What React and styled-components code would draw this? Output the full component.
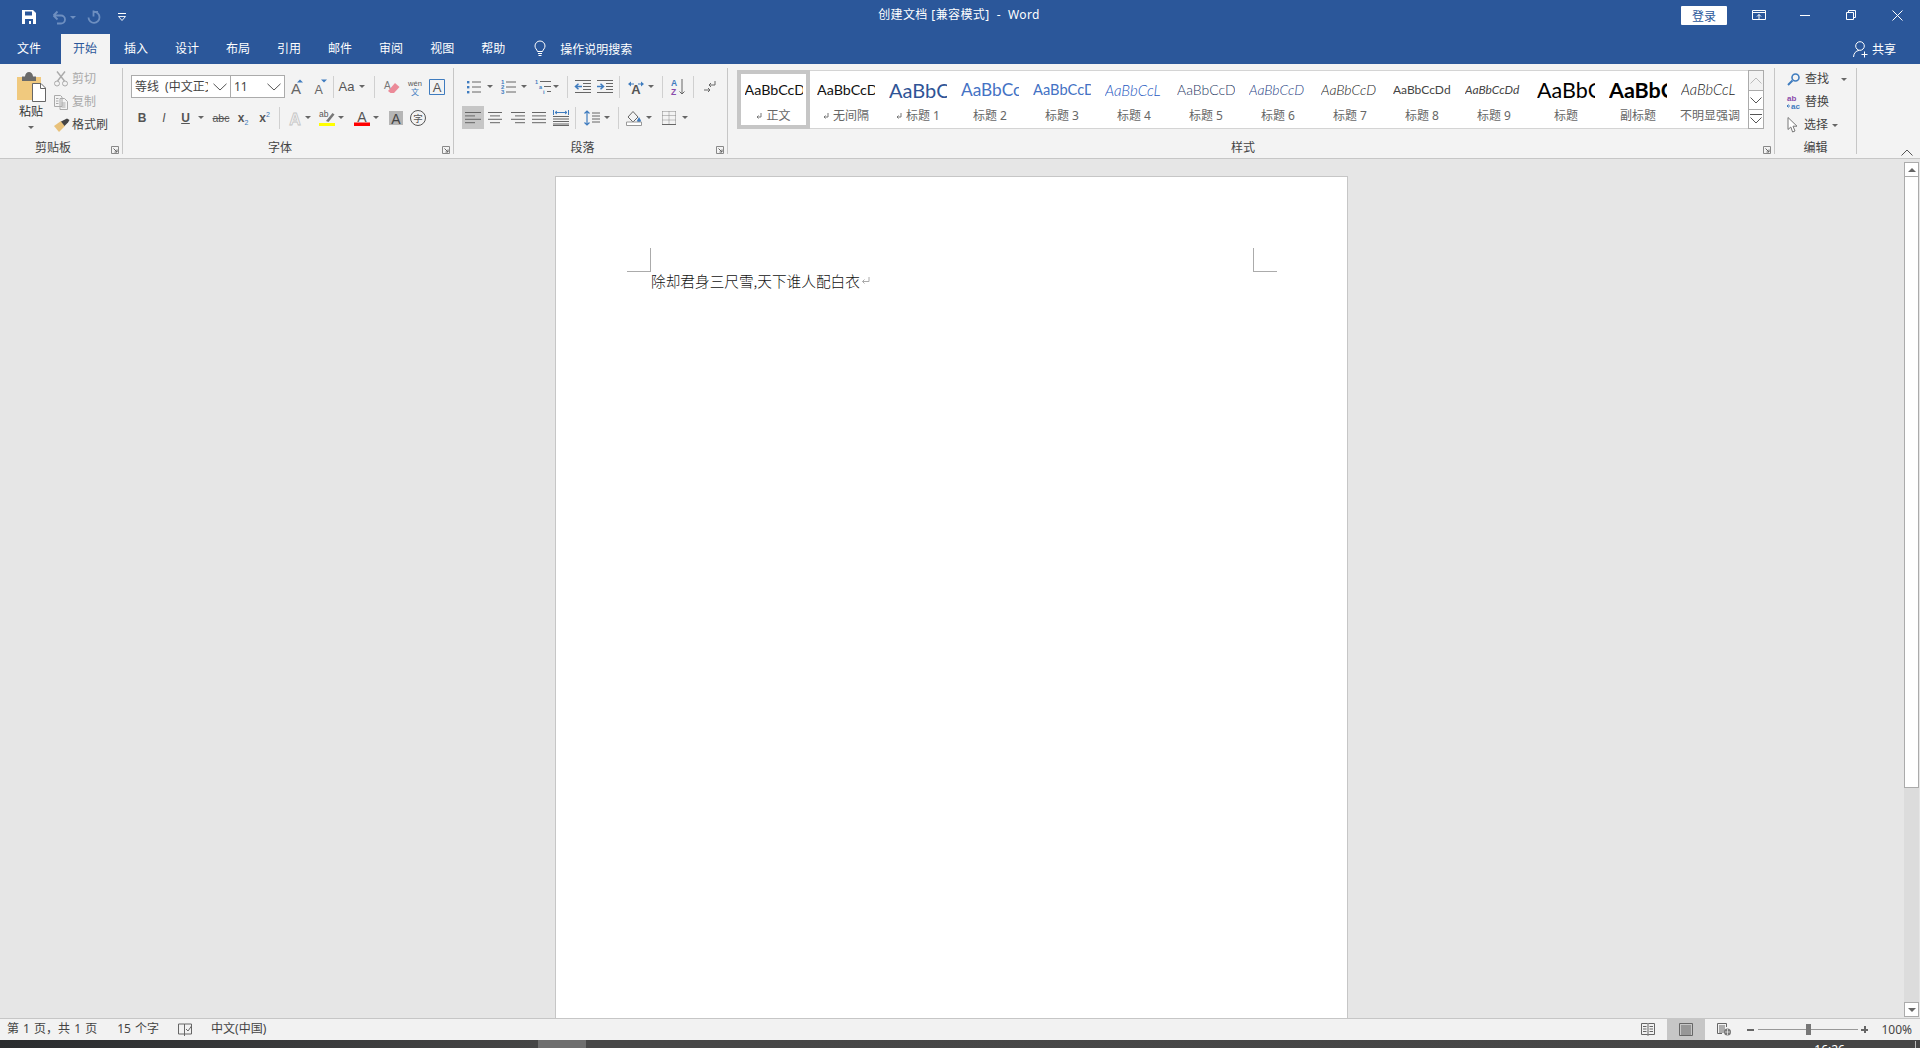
import React from "react";
import styled, { createGlobalStyle } from "styled-components";

const Global = createGlobalStyle`
  html, body, #root { margin: 0; height: 100%; overflow: hidden; }
  body { font-family: "Noto Sans", "Noto Sans CJK SC", sans-serif; font-size: 12px; color: #444; }
  * { box-sizing: border-box; }
`;

const Shell = styled.div`height: 100vh; display: flex; flex-direction: column; background: #e6e6e6;`;
const TitleBar = styled.header`height: 34px; flex: none; background: #2b579a; color: #fff; display: grid; grid-template-columns: 1fr auto 1fr;`;
const Qat = styled.div`display: flex; align-items: center; padding-left: 22px;`;
const QatSlot = styled.span`display: flex; align-items: center; justify-content: center; width: ${p => p.$w}px; height: 16px; margin-left: ${p => p.$ml || 0}px;`;
const Title = styled.div`line-height: 30px; font-size: 12px; white-space: pre; color: #fff; letter-spacing: .4px; margin-left: -2px;`;
const WinControls = styled.div`display: flex; justify-content: flex-end; align-items: flex-start;`;
const LoginBtn = styled.button`width: 46px; height: 19px; margin: 6px 9px 0 0; border: 0; padding: 0; border-radius: 1px; background: #fff; color: #2b579a; font: 12px/18px "Noto Sans CJK SC", sans-serif;`;
const WinBtn = styled.span`width: 46px; height: 30px; display: flex; align-items: center; justify-content: center;`;

const TabBar = styled.nav`height: 30px; flex: none; background: #2b579a; display: flex; color: #fff;`;
const Tab = styled.span`height: 30px; line-height: 29px; padding: ${p => p.$first ? "0 20px 0 17px" : p.$active ? "0 13px 0 12px" : "0 13px 0 14px"}; background: ${p => p.$active ? "#f3f3f3" : "transparent"}; color: ${p => p.$active ? "#2b579a" : "#fff"};`;
const SearchHint = styled.span`display: flex; align-items: center; gap: 13px; margin-left: 15px; line-height: 29px;`;
const Share = styled.span`margin-left: auto; padding-right: 24px; display: flex; align-items: center; gap: 4px;`;

const Ribbon = styled.section`height: 95px; flex: none; background: #f3f3f3; border-bottom: 1px solid #c6c6c6; padding-top: 4px; display: flex; align-items: flex-start;`;
const Group = styled.div`width: ${p => p.$w}px; height: 86px; flex: none; border-right: 1px solid #c6c6c6; display: flex; flex-direction: column;`;
const GroupBody = styled.div`height: 70px; flex: none; display: flex; padding: ${p => p.$pad || "0"};`;
const GroupFoot = styled.div`height: 16px; display: flex; align-items: flex-start;`;
const GroupLabel = styled.span`flex: 1; text-align: center; line-height: 16px; margin-top: 2px; color: #444;`;
const Launcher = styled.span`width: 16px; flex: none; padding: 8px 0 0 5px;`;

const PasteCol = styled.div`width: 46px; margin-left: 8px; display: flex; flex-direction: column; align-items: center; padding-top: 4px; color: #333;`;
const PasteLabel = styled.span`line-height: 16px; margin-top: 2px;`;
const PasteCaret = styled.span`margin-top: 6px;`;
const ClipCol = styled.div`display: flex; flex-direction: column; gap: 5px; padding-top: 2px;`;
const ClipRow = styled.span`height: 18px; display: flex; align-items: center; gap: ${p => p.$gap ?? 4}px; line-height: 18px; color: ${p => p.$off ? "#aaa" : "#444"};`;
const TrailCaret = styled.span`margin-left: ${p => p.$ml}px;`;

const ToolRows = styled.div`display: flex; flex-direction: column; gap: 8px; padding: 7px 0 0 ${p => p.$left}px;`;
const ToolRow = styled.div`height: 23px; display: flex; align-items: center;`;
const Cell = styled.span`width: ${p => p.$w}px; height: 23px; flex: none; display: flex; align-items: center; justify-content: center; gap: ${p => p.$gap ?? 0}px; background: ${p => p.$on ? "#c6c6c6" : "transparent"};`;
const VSep = styled.span`width: 1px; height: 22px; flex: none; background: #d0d0d0; margin: 0 ${p => p.$m ?? 4}px;`;
const Caret = styled.i`display: block; flex: none; width: 0; height: 0; border: 3px solid transparent; border-top: 3px solid #666; border-bottom: 0;`;
const Combo = styled.span`width: ${p => p.$w}px; height: 23px; flex: none; background: #fff; border: 1px solid #ababab; margin-right: -1px; display: flex; align-items: center; padding: 0 3px 0 3px;`;
const ComboText = styled.span`flex: 1; min-width: 0; overflow: hidden; white-space: nowrap; color: #444; font-size: 12px; line-height: 21px; margin-right: 5px; word-spacing: 3px;`;
const B = styled.span`font: ${p => p.$i ? "italic " : ""}${p => p.$wt || 700} ${p => p.$s || 12}px/14px "Liberation Sans", sans-serif; color: ${p => p.$c || "#555"}; text-decoration: ${p => p.$strike ? "line-through" : p.$u ? "underline" : "none"};`;
const Sub = styled.sub`font-size: 7px; color: #3a78b8; line-height: 0; font-weight: 400;`;
const Sup = styled.sup`font-size: 7px; color: #3a78b8; line-height: 0; font-weight: 400;`;

const Gallery = styled.div`width: 1027px; height: 59px; margin: 2px 0 0 9px; background: #fff; border: 1px solid #d4d4d4; display: flex;`;
const StyleItem = styled.div`width: ${p => p.$on ? 73 : 72}px; height: 59px; margin: -1px 0 -1px ${p => p.$on ? -1 : 0}px; flex: none; box-shadow: ${p => p.$on ? "inset 0 0 0 4px #c6c6c6" : "none"}; display: flex; flex-direction: column; align-items: center;`;
const Preview = styled.div`width: 58px; height: 40px; overflow: hidden; white-space: nowrap; line-height: 40px; font-family: Lato, "Noto Sans", sans-serif; font-size: ${p => p.$s || 14}px; font-style: ${p => p.$i ? "italic" : "normal"}; font-weight: ${p => p.$wt || 300}; color: ${p => p.$c || "#000"};`;
const StyleName = styled.div`height: 12px; display: flex; align-items: center; gap: 4px; color: #666; white-space: nowrap; line-height: 12px;`;
const GalleryScroll = styled.div`width: 16px; margin: -1px 0 -1px 2px; display: flex; flex-direction: column; flex: none;`;
const GalleryBtn = styled.span`height: ${p => p.$h}px; margin-top: ${p => p.$top ? -1 : 0}px; border: 1px solid #ababab; background: ${p => p.$off ? "#f3f3f3" : "#fff"}; display: flex; align-items: center; justify-content: center;`;
const Collapse = styled.span`margin: 81px 0 0 44px;`;

const Main = styled.main`flex: 1; min-height: 0; display: flex;`;
const Canvas = styled.div`flex: 1; min-width: 0; overflow: hidden; display: flex; justify-content: center; align-items: flex-start; padding: 17px 1px 0 0;`;
const Page = styled.article`width: 793px; height: 1123px; flex: none; background: #fff; border: 1px solid #c6c6c6; padding: 71px 70px 71px 71px;`;
const CropRow = styled.div`height: 24px; display: flex; justify-content: space-between;`;
const Crop = styled.span`width: 24px; height: 24px; border-bottom: 1px solid #ababab; ${p => p.$right ? "border-left" : "border-right"}: 1px solid #ababab;`;
const DocLine = styled.p`margin: 0; padding: 0 0 0 24px; font: 300 14.67px/18px "Noto Sans CJK SC", sans-serif; color: #111; white-space: pre; display: flex; align-items: center;`;
const ParaMark = styled.span`margin-left: 1px; display: flex;`;

const ScrollCol = styled.aside`width: 16px; flex: none; padding: 3px 1px 1px 0; display: flex; flex-direction: column;`;
const ScrollBtn = styled.span`height: 15px; flex: none; background: #fff; border: 1px solid #ababab; display: flex; align-items: center; justify-content: center;`;
const Thumb = styled.span`height: 612px; flex: none; background: #fff; border: 1px solid #ababab; margin-top: -1px;`;
const Track = styled.span`flex: 1; background: #dcdcdc;`;

const Status = styled.footer`height: 22px; flex: none; background: #f2f2f2; border-top: 1px solid #c6c6c6; display: flex; align-items: center; color: #444; padding-left: 7px;`;
const StatText = styled.span`line-height: 19px; height: 19px; margin-bottom: 2px; white-space: pre; word-spacing: 1px; margin-left: ${p => p.$ml || 0}px; display: flex; align-items: center;`;
const StatRight = styled.div`margin-left: auto; height: 21px; display: flex; align-items: center;`;
const ViewBtn = styled.span`width: 38px; height: 21px; display: flex; align-items: center; justify-content: center; background: ${p => p.$on ? "#c6c6c6" : "transparent"};`;
const ZoomSign = styled.span`width: 7px; height: 7px; display: block; position: relative; margin: ${p => p.$m}; &::before { content: ""; position: absolute; left: 0; right: 0; top: 3px; height: 1.5px; background: #666; } ${p => p.$plus ? `&::after { content: ""; position: absolute; top: 0; bottom: 0; left: 3px; width: 1.5px; background: #666; }` : ""}`;
const Slider = styled.span`width: 100px; height: 11px; display: flex; align-items: center; justify-content: center; background: linear-gradient(#999, #999) center / 100% 1px no-repeat;`;
const SliderKnob = styled.span`width: 5px; height: 11px; background: #777;`;
const Percent = styled.span`margin: 0 8px 0 13px; line-height: 21px; color: #444;`;

const Taskbar = styled.div`height: 8px; flex: none; overflow: hidden; background: linear-gradient(90deg, #2a2c2e 0%, #474747 30%, #464646 100%); display: flex;`;
const TaskItem = styled.span`width: 48px; margin-left: 538px; background: #6e6e6e;`;
const Clock = styled.span`margin-left: auto; margin-right: 70px; color: #fff; font: 12px/16px "Noto Sans", sans-serif; padding-top: 2px;`;
const TrayLine = styled.span`width: 1px; background: #bbb; margin-right: 4px; margin-top: 1px;`;

const Svg = styled.svg`display: block; flex: none; overflow: visible;`;
const Ico = ({ w = 16, h = 16, children }) => <Svg width={w} height={h} viewBox={`0 0 ${w} ${h}`} fill="none">{children}</Svg>;
const G = "#666", BL = "#3f7cbf";
const lines = (ys, x1, x2, c = G) => ys.map(y => <path key={y} d={`M${x1} ${y + .5}H${x2}`} stroke={c} />);

const SaveIcon = () => <Ico w={14} h={14}><path d="M0 0H11L14 3V14H0Z" fill="#fff" /><path d="M3 1.5H10V5.5H3Z" fill="#2b579a" /><path d="M3 9H11V14H9V11H7V14H3Z" fill="#2b579a" /></Ico>;
const UndoIcon = () => <Ico w={14} h={14}><path d="M1.5 5.5H9A4 4 0 0 1 9 13.5H5M1.5 5.5L5.5 1.5M1.5 5.5L5.5 9.5" stroke="#6e8fc0" strokeWidth="1.8" /></Ico>;
const RedoIcon = () => <Ico w={14} h={14}><path d="M8 1.8A5.5 5.5 0 1 1 2.5 7.5" stroke="#6e8fc0" strokeWidth="1.8" /><path d="M7.5 .5V1.8H12M7.5 1.8V6.5" stroke="#6e8fc0" strokeWidth="1.8" /></Ico>;
const QatMore = () => <Ico w={8} h={9}><path d="M0 .5H8" stroke="#fff" /><path d="M.5 3.5H7.5L4 7.5Z" stroke="#fff" strokeWidth=".9" /></Ico>;
const RibbonOpt = () => <Ico w={14} h={10}><path d="M.5 .5H13.5V9.5H.5Z" stroke="#fff" /><path d="M.5 2.5H13.5" stroke="#fff" /><path d="M7 9V4.5M5 6.5L7 4.5L9 6.5" stroke="#fff" /></Ico>;
const MinIco = () => <Ico w={10} h={10}><path d="M0 5.5H10" stroke="#fff" /></Ico>;
const RestoreIco = () => <Ico w={10} h={10}><path d="M.5 2.5H7.5V9.5H.5ZM2.5 2.5V.5H9.5V7.5H7.5" stroke="#fff" /></Ico>;
const CloseIco = () => <Ico w={11} h={11}><path d="M.5 .5L10.5 10.5M10.5 .5L.5 10.5" stroke="#fff" /></Ico>;
const Bulb = () => <Ico w={14} h={16}><path d="M4.5 10.5C4 8.5 2 7.5 2 5A5 5 0 0 1 12 5C12 7.5 10 8.5 9.5 10.5ZM5 12.5H9M5.5 14.5H8.5" stroke="#fff" /></Ico>;
const ShareIco = () => <Ico w={15} h={17}><circle cx="7" cy="5" r="4.3" stroke="#fff" /><path d="M.5 16C.8 12 3 9.8 6 9.4" stroke="#fff" /><path d="M11.5 10.5V16.5M8.5 13.5H14.5" stroke="#fff" /></Ico>;

const PasteIco = () => <Ico w={29} h={30}><path d="M0 5H24V28H0Z" fill="#f0c97e" /><path d="M8 4.5C8 2 10 0 12 0S16 2 16 4.5H19V9H5V4.5Z" fill="#6a6a6a" /><path d="M15.5 11.5H24L28.5 16V29.5H15.5Z" fill="#fff" stroke="#666" /><path d="M23.5 11.5V16.5H28.5" stroke="#666" /></Ico>;
const CutIco = () => <Ico w={14} h={16}><path d="M3 .5L10.5 10M11 .5L3.5 10" stroke="#aaa" strokeWidth="1.4" /><circle cx="3" cy="12.5" r="2.5" stroke="#aaa" /><circle cx="11" cy="12.5" r="2.5" stroke="#aaa" /></Ico>;
const CopyIco = () => <Ico w={14} h={15}><path d="M.5 .5H6.5L8 2V11.5H.5ZM6 3.5H10.5L13.5 6.5V14.5H6Z" stroke="#aaa" fill="#f3f3f3" /><path d="M2 3.5H4.5M2 6H4.5M2 8.5H4.5M7.5 8H11.5M7.5 10H11.5M7.5 12H11.5" stroke="#aaa" /></Ico>;
const BrushIco = () => <Ico w={16} h={14}><path d="M0 8L7 3L11 8L5 14Z" fill="#e8c17a" /><path d="M7 3.5L13 .5L15.5 2L14 4.5L10.5 8Z" fill="#444" /></Ico>;
const Launch = () => <Ico w={8} h={8}><path d="M.5 .5H7.5V7.5H.5Z" stroke="#888" /><path d="M2.5 2.5L6 6M6 3.5V6H3.5" stroke="#666" /></Ico>;
const Chevron = () => <Ico w={14} h={8}><path d="M.5 .8L7 7L13.5 .8" stroke="#555" /></Ico>;

const GrowA = ({ up }) => <Svg width={18} height={16} viewBox="0 0 18 16" fill="none"><text x={up ? 4 : 3.5} y="15" fontSize={up ? 15 : 12.5} fontFamily="Liberation Sans" fill="#666">A</text><path d={up ? "M10 3.5L13 .5L16 3.5Z" : "M10 .5H16L13 3.5Z"} fill={BL} /></Svg>;
const EraserIco = () => <Ico w={16} h={16}><text x="0" y="10" fontSize="10" fontFamily="Liberation Sans" fill="#777">A</text><path d="M4 12L11 4L15.5 8L10 14H6.5Z" fill="#eb8a98" /></Ico>;
const WenIco = () => <Svg width={16} height={16} viewBox="0 0 16 16" fill="none"><text x="8" y="6.5" textAnchor="middle" fontSize="7.5" fontFamily="Liberation Sans" fill="#555">wén</text><text x="8" y="15.5" textAnchor="middle" fontSize="8" fontFamily="Noto Sans CJK SC" fill={BL}>文</text></Svg>;
const BoxA = () => <Ico w={16} h={16}><path d="M.5 .5H15.5V15.5H.5Z" stroke={BL} /><text x="8" y="13" textAnchor="middle" fontSize="13" fontFamily="Liberation Sans" fill="#555">A</text></Ico>;
const GlowA = () => <Ico w={14} h={14}><text x="7" y="13.5" textAnchor="middle" fontSize="16" fontWeight="700" fontFamily="Liberation Sans" fill="#f3f3f3" stroke="#c4c4c4" strokeWidth=".8">A</text></Ico>;
const HighlightIco = () => <Ico w={16} h={16}><text x="0" y="7" fontSize="8.5" fontFamily="Liberation Sans" fill="#555">ab</text><path d="M7 11L13.5 3L15.5 4.5L9.5 12Z" fill="#777" /><path d="M0 13H16V16H0Z" fill="#ff0" /></Ico>;
const ColorA = () => <Ico w={16} h={16}><text x="8" y="12" textAnchor="middle" fontSize="14" fontFamily="Liberation Sans" fill="#555">A</text><path d="M0 12.5H16V16H0Z" fill="#f00" /></Ico>;
const ShadeA = () => <Ico w={14} h={14}><path d="M0 0H14V14H0Z" fill="#b5b5b5" /><text x="7" y="12.5" textAnchor="middle" fontSize="14" fontWeight="400" fontFamily="Liberation Sans" fill="#444">A</text></Ico>;
const CircleZi = () => <Ico w={16} h={16}><circle cx="8" cy="8" r="7.5" stroke="#555" /><text x="8" y="11.5" textAnchor="middle" fontSize="9.5" fontFamily="Noto Sans CJK SC" fill="#555">字</text></Ico>;

const BulletIco = () => <Ico w={14} h={14}>{[1, 6, 11].map(y => <path key={y} d={`M0 ${y}H2.4V${y + 2.4}H0Z`} fill={BL} />)}{lines([1.5, 6.5, 11.5], 5, 14)}</Ico>;
const NumIco = () => <Ico w={15} h={15}>{[["1", 5], ["2", 10], ["3", 15]].map(([t, y]) => <text key={t} x="0" y={y} fontSize="6" fontWeight="700" fontFamily="Liberation Sans" fill={BL}>{t}</text>)}{lines([2.5, 7.5, 12.5], 5, 15)}</Ico>;
const MultiIco = () => <Ico w={16} h={15}><text x="0" y="5" fontSize="5.5" fontWeight="700" fontFamily="Liberation Sans" fill={BL}>1</text><text x="4" y="10" fontSize="5.5" fontWeight="700" fontFamily="Liberation Sans" fill={BL}>a</text><text x="8" y="15" fontSize="5.5" fontWeight="700" fontFamily="Liberation Sans" fill={BL}>i</text>{lines([2], 5, 16)}{lines([7], 9, 16)}{lines([12], 12, 16)}</Ico>;
const IndentIco = ({ inc }) => <Ico w={16} h={13}>{lines([0, 12], 0, 16)}{lines([3, 6, 9], inc ? 9 : 8, 16)}<path d={inc ? "M0 6.5H6M3.5 3.8L6.5 6.5L3.5 9.2" : "M7 6.5H1M3.5 3.8L.5 6.5L3.5 9.2"} stroke={BL} strokeWidth="1.5" /></Ico>;
const CnLayoutIco = () => <Ico w={18} h={14}><path d="M1 4L4 1.5V6.5ZM17 4L14 1.5V6.5Z" fill={BL} /><path d="M4 4H7M11 4H14" stroke={BL} /><text x="9" y="13.5" textAnchor="middle" fontSize="13" fontWeight="700" fontFamily="Liberation Sans" fill="#555">A</text></Ico>;
const SortIco = () => <Ico w={14} h={16}><text x="0" y="7" fontSize="8.5" fontWeight="700" fontFamily="Liberation Sans" fill={BL}>A</text><text x="0" y="15.5" fontSize="8.5" fontWeight="700" fontFamily="Liberation Sans" fill="#8a4bab">Z</text><path d="M11 0V15M8.5 12.5L11 15L13.5 12.5" stroke="#666" /></Ico>;
const ShowMarksIco = () => <Ico w={12} h={13}><path d="M11 1V5H5M7 3L5 5L7 7" stroke="#666" /><path d="M0 10H6M4 8L6 10L4 12" stroke="#666" /></Ico>;
const AlignIco = ({ kind }) => {
  const rows = { left: [[0, 16], [0, 10], [0, 16], [0, 10]], center: [[1, 15], [3, 13], [1, 15], [3, 13]], right: [[2, 16], [6, 16], [2, 16], [6, 16]], just: [[1, 15], [1, 15], [1, 15], [1, 15]] }[kind];
  return <Ico w={16} h={13}>{rows.map(([a, b], i) => <path key={i} d={`M${a} ${1.5 + i * 3.4}H${b}`} stroke={G} />)}</Ico>;
};
const DistIco = () => <Ico w={16} h={16}><path d="M.5 0V5M15.5 0V5" stroke={BL} /><path d="M2 2.5H14M4 1L2 2.5L4 4M12 1L14 2.5L12 4" stroke={BL} />{lines([6, 8.5, 11, 13.5, 15], 0, 16)}</Ico>;
const LineSpaceIco = () => <Ico w={16} h={16}><path d="M3 1V15M.5 3.5L3 1L5.5 3.5M.5 12.5L3 15L5.5 12.5" stroke={BL} strokeWidth="1.2" />{lines([2.5, 5.5, 8.5, 11.5], 8, 16)}</Ico>;
const BucketIco = () => <Ico w={16} h={16}><path d="M2 7L7 1.5L12 7L7 12Z" fill="#f3f3f3" stroke="#666" /><path d="M13 7L15 10.5A2 2 0 0 1 11 10.5Z" fill={BL} /><path d="M.5 12H15.5V15.5H.5Z" stroke="#999" fill="#fff" /></Ico>;
const BorderIco = () => <Ico w={14} h={14}><path d="M.5 .5H13.5M.5 4.5H13.5M.5 9H13.5M.5 .5V13M7 .5V13M13.5 .5V13" stroke="#888" strokeDasharray="1 1" /><path d="M0 13.5H14" stroke="#666" /></Ico>;

const FindIco = () => <Ico w={13} h={13}><circle cx="8.5" cy="4.5" r="3.5" stroke={BL} strokeWidth="1.6" /><path d="M5.5 7.5L1 12" stroke={BL} strokeWidth="2" /></Ico>;
const ReplaceIco = () => <Ico w={14} h={16}><text x="0" y="7" fontSize="8" fontWeight="700" fontFamily="Liberation Sans" fill="#8a4bab">ab</text><text x="4" y="15" fontSize="8" fontWeight="700" fontFamily="Liberation Sans" fill={BL}>ac</text><path d="M0 12H3M1.5 10.5L0 12L1.5 13.5" stroke={BL} /></Ico>;
const CursorIco = () => <Ico w={11} h={16}><path d="M1 .5V12.5L3.8 10L5.6 15L8 14L6 9.2H10Z" stroke="#777" fill="#fff" /></Ico>;
const RetMark = () => <Ico w={6} h={7}><path d="M5 0V4H1M2.5 2.5L1 4L2.5 5.5" stroke="#777" /></Ico>;
const DocMark = () => <Ico w={9} h={8}><path d="M8 0V4.5H1.5M3.5 2.5L1.5 4.5L3.5 6.5" stroke="#aaa" /></Ico>;

const UpTri = ({ c = "#666", s = 4 }) => <Ico w={s * 2} h={s}><path d={`M0 ${s}L${s} 0L${s * 2} ${s}Z`} fill={c} /></Ico>;
const DownTri = ({ c = "#666", s = 4 }) => <Ico w={s * 2} h={s}><path d={`M0 0H${s * 2}L${s} ${s}Z`} fill={c} /></Ico>;
const ChevUp = ({ c = "#bbb" }) => <Ico w={12} h={7}><path d="M.5 6.5L6 1L11.5 6.5" stroke={c} /></Ico>;
const ChevDn = () => <Ico w={12} h={7}><path d="M.5 .5L6 6L11.5 .5" stroke="#555" /></Ico>;
const GalMore = () => <Ico w={12} h={11}><path d="M0 .5H12" stroke="#555" /><path d="M.5 3.5L6 9L11.5 3.5" stroke="#555" /></Ico>;
const CollapseIco = () => <Ico w={12} h={7}><path d="M.5 6.5L6 1L11.5 6.5" stroke="#555" /></Ico>;

const ProofIco = () => <Ico w={14} h={14}><path d="M6.5 2H.5V12H6.5M6.5 2V14M6.5 2H13.5V12H6.5" stroke="#666" /><path d="M8 7L10 9L13.5 4" stroke="#666" /></Ico>;
const ReadIco = () => <Ico w={14} h={13}><path d="M.5 .5H6.5L7 1L7.5 .5H13.5V11.5H7.5L7 12.5L6.5 11.5H.5ZM7 1V12" stroke="#666" />{lines([3, 5.5, 8], 2, 5.5)}{lines([3, 5.5, 8], 8.5, 12)}</Ico>;
const PrintIco = () => <Ico w={14} h={13}><path d="M.5 .5H13.5V12.5H.5Z" stroke="#666" fill="#c6c6c6" />{lines([2.5, 4.5, 6.5, 8.5, 10.5], 2, 12)}</Ico>;
const WebIco = () => <Ico w={14} h={13}><path d="M.5 .5H9.5V4M.5 .5V10.5H5" stroke="#666" />{lines([2.5, 4.5, 6.5, 8.5], 2, 8)}<circle cx="10.5" cy="9" r="3.5" fill="#777" /><path d="M8 9H13M10.5 6V12" stroke="#f2f2f2" strokeWidth=".7" /></Ico>;

const tabs = ["开始", "插入", "设计", "布局", "引用", "邮件", "审阅", "视图", "帮助"];
const gallery = [
  { text: "AaBbCcD", name: "正文", mark: true, on: true, s: 14.3, wt: 400, c: "#111" },
  { text: "AaBbCcD", name: "无间隔", mark: true, s: 14.3, wt: 400, c: "#111" },
  { text: "AaBbC", name: "标题 1", mark: true, s: 20, wt: 400, c: "#2f5496" },
  { text: "AaBbCc", name: "标题 2", s: 17.3, wt: 400, c: "#4472c4" },
  { text: "AaBbCcD", name: "标题 3", s: 14.67, wt: 400, c: "#4472c4" },
  { text: "AaBbCcL", name: "标题 4", i: true, s: 15, c: "#2557c0" },
  { text: "AaBbCcD", name: "标题 5", c: "#1f3864" },
  { text: "AaBbCcD", name: "标题 6", i: true, c: "#1f4284" },
  { text: "AaBbCcD", name: "标题 7", i: true, c: "#222" },
  { text: "AaBbCcDd", name: "标题 8", s: 12, wt: 400, c: "#444" },
  { text: "AaBbCcDd", name: "标题 9", s: 12, i: true, wt: 400, c: "#444" },
  { text: "AaBbC", name: "标题", s: 21.5, wt: 400, c: "#000" },
  { text: "AaBbC", name: "副标题", s: 21.5, wt: 700, c: "#000" },
  { text: "AaBbCcL", name: "不明显强调", i: true, s: 14.67, c: "#222" },
];

export default function App() {
  return (
    <Shell>
      <Global />
      <TitleBar>
        <Qat>
          <QatSlot $w={14}><SaveIcon /></QatSlot>
          <QatSlot $w={14} $ml={16}><UndoIcon /></QatSlot>
          <QatSlot $w={6} $ml={4}><DownTri c="#6e8fc0" s={3} /></QatSlot>
          <QatSlot $w={14} $ml={10}><RedoIcon /></QatSlot>
          <QatSlot $w={8} $ml={18}><QatMore /></QatSlot>
        </Qat>
        <Title>创建文档 [兼容模式]  -  Word</Title>
        <WinControls>
          <LoginBtn>登录</LoginBtn>
          <WinBtn><RibbonOpt /></WinBtn>
          <WinBtn><MinIco /></WinBtn>
          <WinBtn><RestoreIco /></WinBtn>
          <WinBtn><CloseIco /></WinBtn>
        </WinControls>
      </TitleBar>
      <TabBar>
        <Tab $first>文件</Tab>
        {tabs.map((t, i) => <Tab key={t} $active={i === 0}>{t}</Tab>)}
        <SearchHint><Bulb />操作说明搜索</SearchHint>
        <Share><ShareIco />共享</Share>
      </TabBar>
      <Ribbon>
        <Group $w={123}>
          <GroupBody>
            <PasteCol>
              <PasteIco />
              <PasteLabel>粘贴</PasteLabel>
              <PasteCaret><Caret /></PasteCaret>
            </PasteCol>
            <ClipCol>
              <ClipRow $off><CutIco />剪切</ClipRow>
              <ClipRow $off><CopyIco />复制</ClipRow>
              <ClipRow $gap={2}><BrushIco />格式刷</ClipRow>
            </ClipCol>
          </GroupBody>
          <GroupFoot><GroupLabel>剪贴板</GroupLabel><Launcher><Launch /></Launcher></GroupFoot>
        </Group>

        <Group $w={331}>
          <GroupBody>
            <ToolRows $left={8}>
              <ToolRow>
                <Combo $w={100}><ComboText>等线 (中文正文)</ComboText><Chevron /></Combo>
                <Combo $w={55}><ComboText>11</ComboText><Chevron /></Combo>
                <Cell $w={24}><GrowA up /></Cell>
                <Cell $w={23}><GrowA /></Cell>
                <VSep $m={2} />
                <Cell $w={32} $gap={5}><B $wt={400} $s={13}>Aa</B><Caret /></Cell>
                <VSep $m={6} />
                <Cell $w={22}><EraserIco /></Cell>
                <Cell $w={23}><WenIco /></Cell>
                <Cell $w={21}><BoxA /></Cell>
              </ToolRow>
              <ToolRow>
                <Cell $w={22}><B>B</B></Cell>
                <Cell $w={22}><B $i $wt={400}>I</B></Cell>
                <Cell $w={35} $gap={8}><B $u>U</B><Caret /></Cell>
                <Cell $w={22}><B $strike $wt={400} $s={10.5}>abc</B></Cell>
                <Cell $w={22}><B>x<Sub>2</Sub></B></Cell>
                <Cell $w={21}><B>x<Sup>2</Sup></B></Cell>
                <VSep $m={4} />
                <Cell $w={30} $gap={3}><GlowA /><Caret /></Cell>
                <Cell $w={34} $gap={3}><HighlightIco /><Caret /></Cell>
                <Cell $w={37} $gap={3}><ColorA /><Caret /></Cell>
                <Cell $w={22}><ShadeA /></Cell>
                <Cell $w={22}><CircleZi /></Cell>
              </ToolRow>
            </ToolRows>
          </GroupBody>
          <GroupFoot><GroupLabel>字体</GroupLabel><Launcher><Launch /></Launcher></GroupFoot>
        </Group>

        <Group $w={274}>
          <GroupBody>
            <ToolRows $left={8}>
              <ToolRow>
                <Cell $w={35} $gap={6}><BulletIco /><Caret /></Cell>
                <Cell $w={33} $gap={5}><NumIco /><Caret /></Cell>
                <Cell $w={33} $gap={2}><MultiIco /><Caret /></Cell>
                <VSep $m={4} />
                <Cell $w={22}><IndentIco /></Cell>
                <Cell $w={22}><IndentIco inc /></Cell>
                <VSep $m={3} />
                <Cell $w={35} $gap={3}><CnLayoutIco /><Caret /></Cell>
                <VSep $m={4} />
                <Cell $w={22}><SortIco /></Cell>
                <VSep $m={4} />
                <Cell $w={24}><ShowMarksIco /></Cell>
              </ToolRow>
              <ToolRow>
                <Cell $w={22} $on><AlignIco kind="left" /></Cell>
                <Cell $w={22}><AlignIco kind="center" /></Cell>
                <Cell $w={22}><AlignIco kind="right" /></Cell>
                <Cell $w={22}><AlignIco kind="just" /></Cell>
                <Cell $w={22}><DistIco /></Cell>
                <VSep $m={3} />
                <Cell $w={36} $gap={4}><LineSpaceIco /><Caret /></Cell>
                <VSep $m={3} />
                <Cell $w={34} $gap={4}><BucketIco /><Caret /></Cell>
                <Cell $w={38} $gap={6}><BorderIco /><Caret /></Cell>
              </ToolRow>
            </ToolRows>
          </GroupBody>
          <GroupFoot><GroupLabel>段落</GroupLabel><Launcher><Launch /></Launcher></GroupFoot>
        </Group>

        <Group $w={1047}>
          <GroupBody>
            <Gallery>
              {gallery.map(g => (
                <StyleItem key={g.name} $on={g.on}>
                  <Preview $s={g.s} $i={g.i} $wt={g.wt} $c={g.c}>{g.text}</Preview>
                  <StyleName>{g.mark && <RetMark />}{g.name}</StyleName>
                </StyleItem>
              ))}
              <GalleryScroll>
                <GalleryBtn $h={21} $off><ChevUp /></GalleryBtn>
                <GalleryBtn $h={20} $top><ChevDn /></GalleryBtn>
                <GalleryBtn $h={20} $top><GalMore /></GalleryBtn>
              </GalleryScroll>
            </Gallery>
          </GroupBody>
          <GroupFoot><GroupLabel>样式</GroupLabel><Launcher><Launch /></Launcher></GroupFoot>
        </Group>

        <Group $w={82}>
          <GroupBody $pad="0 0 0 12px">
            <ClipCol>
              <ClipRow $gap={5}><FindIco />查找<TrailCaret $ml={7}><Caret /></TrailCaret></ClipRow>
              <ClipRow $gap={4}><ReplaceIco />替换</ClipRow>
              <ClipRow $gap={6}><CursorIco />选择<TrailCaret $ml={-2}><Caret /></TrailCaret></ClipRow>
            </ClipCol>
          </GroupBody>
          <GroupFoot><GroupLabel>编辑</GroupLabel></GroupFoot>
        </Group>
        <Collapse><CollapseIco /></Collapse>
      </Ribbon>
      <Main>
        <Canvas>
          <Page>
            <CropRow><Crop /><Crop $right /></CropRow>
            <DocLine>除却君身三尺雪,天下谁人配白衣<ParaMark><DocMark /></ParaMark></DocLine>
          </Page>
        </Canvas>
        <ScrollCol>
          <ScrollBtn><UpTri /></ScrollBtn>
          <Thumb />
          <Track />
          <ScrollBtn><DownTri /></ScrollBtn>
        </ScrollCol>
      </Main>
      <Status>
        <StatText>第 1 页，共 1 页</StatText>
        <StatText $ml={20}>15 个字</StatText>
        <StatText $ml={19}><ProofIco /></StatText>
        <StatText $ml={19}>中文(中国)</StatText>
        <StatRight>
          <ViewBtn><ReadIco /></ViewBtn>
          <ViewBtn $on><PrintIco /></ViewBtn>
          <ViewBtn><WebIco /></ViewBtn>
          <ZoomSign $m="0 4px 0 4px" />
          <Slider><SliderKnob /></Slider>
          <ZoomSign $m="0 0 0 3px" $plus />
          <Percent>100%</Percent>
        </StatRight>
      </Status>
      <Taskbar>
        <TaskItem />
        <Clock>16:26</Clock>
        <TrayLine />
      </Taskbar>
    </Shell>
  );
}
